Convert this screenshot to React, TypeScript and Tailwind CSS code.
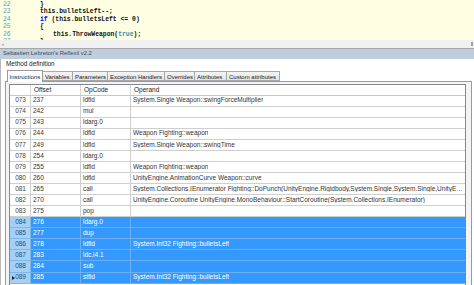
import React from "react";

const rows: [string, string, string, string][] = [
  ["073", "237", "ldfld", "System.Single Weapon::swingForceMultiplier"],
  ["074", "242", "mul", ""],
  ["075", "243", "ldarg.0", ""],
  ["076", "244", "ldfld", "Weapon Fighting::weapon"],
  ["077", "249", "ldfld", "System.Single Weapon::swingTime"],
  ["078", "254", "ldarg.0", ""],
  ["079", "255", "ldfld", "Weapon Fighting::weapon"],
  ["080", "260", "ldfld", "UnityEngine.AnimationCurve Weapon::curve"],
  ["081", "265", "call", "System.Collections.IEnumerator Fighting::DoPunch(UnityEngine.Rigidbody,System.Single,System.Single,UnityEngine.AnimationCurve,System.Single)"],
  ["082", "270", "call", "UnityEngine.Coroutine UnityEngine.MonoBehaviour::StartCoroutine(System.Collections.IEnumerator)"],
  ["083", "275", "pop", ""],
  ["084", "276", "ldarg.0", ""],
  ["085", "277", "dup", ""],
  ["086", "278", "ldfld", "System.Int32 Fighting::bulletsLeft"],
  ["087", "283", "ldc.i4.1", ""],
  ["088", "284", "sub", ""],
  ["089", "285", "stfld", "System.Int32 Fighting::bulletsLeft"],
];

const tabs: [string, number][] = [
  ["Instructions", 36],
  ["Variables", 30],
  ["Parameters", 35],
  ["Exception Handlers", 57],
  ["Overrides", 30],
  ["Attributes", 32],
  ["Custom attributes", 53],
];

function CodeLine({ n, indent, children }: { n: string; indent: number; children?: React.ReactNode }) {
  return (
    <div className="flex h-[7.6px] items-center leading-[7.6px]">
      <span className="w-[10px] pl-[3px] font-normal text-[#5aa0b8]">{n}</span>
      <span className="whitespace-pre text-[#111]" style={{ paddingLeft: indent }}>
        {children}
      </span>
    </div>
  );
}

export default function App() {
  return (
    <div
      className="relative flex h-[285px] w-[474px] flex-col overflow-hidden bg-white text-[#222]"
      style={{ fontFamily: '"Liberation Sans", Arial, sans-serif' }}
    >
      {/* code editor */}
      <div
        className="h-[40px] shrink-0 overflow-hidden bg-[#fffee3] pt-[0.5px] text-[6.4px] font-bold"
        style={{ fontFamily: '"Liberation Mono", "DejaVu Sans Mono", monospace' }}
      >
        <CodeLine n="22" indent={30}>{"}"}</CodeLine>
        <CodeLine n="23" indent={30}>this.bulletsLeft--;</CodeLine>
        <CodeLine n="24" indent={30}>
          <span className="text-[#0000ff]">if</span> (this.bulletsLeft &lt;= 0)
        </CodeLine>
        <CodeLine n="25" indent={30}>{"{"}</CodeLine>
        <CodeLine n="26" indent={43}>
          this.ThrowWeapon(<span className="text-[#2b91af]">true</span>);
        </CodeLine>
        <CodeLine n="27" indent={30}>{"}"}</CodeLine>
      </div>

      {/* horizontal scrollbar */}
      <div className="flex h-[9px] shrink-0 items-center justify-between border-b border-[#a8a8a8] bg-[#f0f0f0] pl-[2px] pr-[1px]">
        <span className="text-[6px] leading-none text-[#606060]">‹</span>
        <span className="h-[4px] w-[2px] bg-[#a0a0a0]" />
      </div>

      {/* title */}
      <div className="flex h-[10px] shrink-0 items-center bg-[#bfcddd] pl-[3px] text-[5.9px] leading-none text-[#3a4a5a]">
        Sebastien Lebreton's Reflexil v2.2
      </div>

      {/* panel */}
      <div className="flex min-h-0 flex-1 flex-col border-l border-[#b8b8b8] bg-white">
        <div className="flex h-[10px] shrink-0 items-center pl-[5px] pt-[1px] text-[6.4px] leading-none">
          Method definition
        </div>

        {/* tabs */}
        <div className="flex h-[12px] shrink-0 items-end pl-[6px]">
          {tabs.map(([t, w], i) => (
            <div
              key={t}
              style={{ width: w }}
              className={
                i === 0
                  ? "relative z-10 -mb-px flex h-[12px] items-center whitespace-nowrap border border-b-0 border-[#9a9a9a] bg-white pl-[1.5px] pt-[1px] text-[6px] leading-none"
                  : "flex h-[10px] items-center whitespace-nowrap border border-l-0 border-[#a8a8a8] bg-gradient-to-b from-[#f4f4f4] to-[#e4e4e4] pl-[2px] pt-[1px] text-[6px] leading-none"
              }
            >
              {t}
            </div>
          ))}
        </div>

        {/* tab page */}
        <div className="ml-[4px] mr-[2px] flex min-h-0 flex-1 flex-col border border-b-0 border-[#9a9a9a] bg-[#f4f4f4] pl-[3px] pr-[5px] pt-[2px]">
          <div className="flex min-h-0 flex-1 flex-col border-l border-t border-r border-[#828790] bg-white text-[6.5px] leading-none">
            {/* header */}
            <div className="flex h-[10.5px] shrink-0 border-b border-[#c8c8c8] bg-white">
              <div className="w-[21px] shrink-0 border-r border-[#d8d8d8]" />
              <div className="flex w-[50px] shrink-0 items-center border-r border-[#d8d8d8] pl-[3px] pt-[1px]">Offset</div>
              <div className="flex w-[50px] shrink-0 items-center border-r border-[#d8d8d8] pl-[3px] pt-[1px]">OpCode</div>
              <div className="flex flex-1 items-center pl-[3px] pt-[1px]">Operand</div>
            </div>
            {rows.map(([n, off, op, operand], i) => {
              const sel = i >= 11;
              return (
                <div key={n} className="flex h-[11.07px] shrink-0">
                  <div
                    className={
                      sel
                        ? "relative flex w-[21px] shrink-0 items-center justify-end border-b border-r border-[#7fb9ea] bg-[#a3d0f4] pr-[4px] text-[#23507e]"
                        : "relative flex w-[21px] shrink-0 items-center justify-end border-b border-r border-[#cfcfcf] bg-white pr-[4px] text-[#444]"
                    }
                  >
                    {n === "089" && (
                      <span className="absolute left-[2px] top-[3px] h-0 w-0 border-y-[2.5px] border-l-[3px] border-y-transparent border-l-[#222]" />
                    )}
                    {n}
                  </div>
                  <div
                    className={
                      "flex w-[50px] shrink-0 items-center border-b border-r pl-[2px] " +
                      (sel ? "border-[#6db0f0] bg-[#3399ff] text-white" : "border-[#cfcfcf] text-[#333]")
                    }
                  >
                    {off}
                  </div>
                  <div
                    className={
                      "flex w-[50px] shrink-0 items-center border-b border-r pl-[2px] " +
                      (sel ? "border-[#6db0f0] bg-[#3399ff] text-white" : "border-[#cfcfcf] text-[#333]")
                    }
                  >
                    {op}
                  </div>
                  <div
                    className={
                      "flex min-w-0 flex-1 items-center border-b pl-[2px] " +
                      (sel ? "border-[#6db0f0] bg-[#3399ff] text-white" : "border-[#cfcfcf] text-[#333]")
                    }
                  >
                    <span className="truncate">{operand}</span>
                  </div>
                </div>
              );
            })}
          </div>
        </div>
      </div>
    </div>
  );
}
